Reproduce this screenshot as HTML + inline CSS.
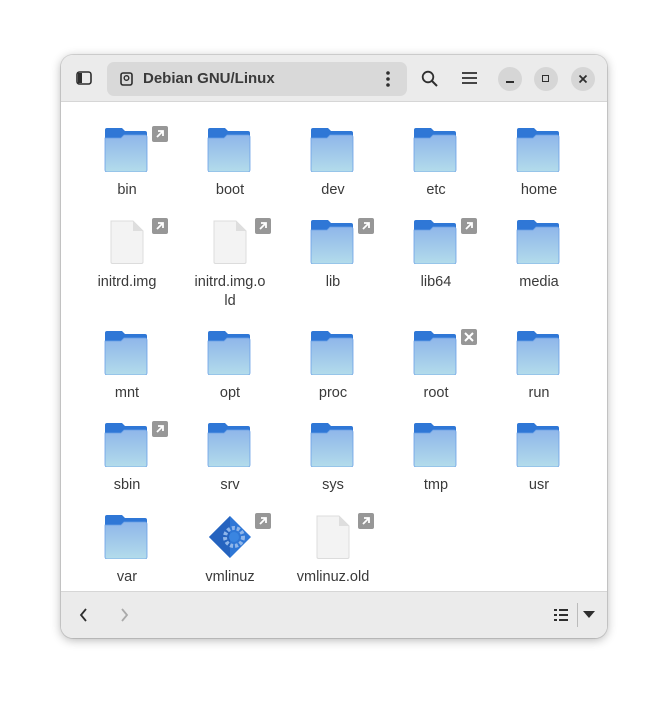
<!DOCTYPE html><html><head><style>
body{margin:0;width:668px;height:706px;background:#fff;font-family:"Liberation Sans","DejaVu Sans",sans-serif;position:relative;overflow:hidden}
.win{position:absolute;left:61px;top:55px;width:546px;height:583px;border-radius:12px;background:#fff;box-shadow:0 2px 10px rgba(0,0,0,.3),0 0 0 1px rgba(0,0,0,.12);overflow:hidden}
.hdr{position:absolute;left:0;top:0;right:0;height:46px;background:#ebebeb;border-bottom:1px solid #d6d6d6}
.path{position:absolute;left:46px;top:7px;width:300px;height:34px;background:#d9d9d9;border-radius:7px}
.path span{position:absolute;left:36px;top:8px;font-size:15px;font-weight:bold;color:#3a3a3a}
.cb{position:absolute;top:12px;width:24px;height:24px;border-radius:50%;background:#d6d6d6}
.ftr{position:absolute;left:0;bottom:0;right:0;height:46px;background:#ebebeb;border-top:1px solid #d6d6d6}
.it{position:absolute;width:100px;text-align:center;font-size:14.5px;color:#3a3a3a;line-height:19px}
.ic{position:absolute}
</style></head><body>
<svg width="0" height="0" style="position:absolute"><defs>
<linearGradient id="fg" x1="0" y1="0" x2="0" y2="1"><stop offset="0" stop-color="#8fb6ea"/><stop offset="1" stop-color="#b3dceb"/></linearGradient>
<symbol id="folder" viewBox="0 0 44 44"><path d="M1 2a2 2 0 0 1 2-2h15l3 3h20a2 2 0 0 1 2 2v35H1z" fill="#2f77d6"/><path d="M1 10h16l3-3h21a2 2 0 0 1 2 2v33a2 2 0 0 1-2 2H3a2 2 0 0 1-2-2z" fill="url(#fg)" stroke="#6aa0e6" stroke-width=".8"/></symbol>
<symbol id="file" viewBox="0 0 44 44"><path d="M6 1h22l10 10v31a1.5 1.5 0 0 1-1.5 1.5h-29A1.5 1.5 0 0 1 6 42z" fill="#f3f3f3" stroke="#dcdcdc"/><path d="M28 1v10h10z" fill="#dedede"/></symbol>
<symbol id="link" viewBox="0 0 16 16"><rect width="16" height="16" rx="2" fill="#979797"/><path d="M5 11l6-6M6 5h5v5" stroke="#fff" stroke-width="1.8" fill="none"/></symbol>
</defs></svg>
<div class="win">
<div class="hdr">
<svg style="position:absolute;left:15px;top:15px" width="16" height="16"><rect x="1" y="2" width="14" height="12" rx="2.5" fill="none" stroke="#2e2e2e" stroke-width="1.6"/><rect x="2" y="3" width="4" height="10" fill="#2e2e2e"/></svg>
<div class="path"><svg style="position:absolute;left:13px;top:10px" width="14" height="14"><rect x="1" y="1" width="11" height="12" rx="2" fill="none" stroke="#2e2e2e" stroke-width="1.6"/><circle cx="6.5" cy="6" r="2.3" fill="none" stroke="#2e2e2e" stroke-width="1.4"/></svg><span>Debian GNU/Linux</span>
<svg style="position:absolute;left:278px;top:8px" width="6" height="18"><circle cx="3" cy="3" r="1.8" fill="#2e2e2e"/><circle cx="3" cy="9" r="1.8" fill="#2e2e2e"/><circle cx="3" cy="15" r="1.8" fill="#2e2e2e"/></svg></div>
<svg style="position:absolute;left:360px;top:15px" width="18" height="18"><circle cx="7" cy="7" r="5.3" fill="none" stroke="#2e2e2e" stroke-width="1.8"/><path d="M11 11l5 5" stroke="#2e2e2e" stroke-width="2"/></svg>
<svg style="position:absolute;left:400px;top:16px" width="17" height="14"><path d="M1 2h15M1 7h15M1 12h15" stroke="#2e2e2e" stroke-width="1.8"/></svg>
<div class="cb" style="left:437px"><div style="position:absolute;left:8px;top:14px;width:8px;height:2px;background:#2e2e2e"></div></div>
<div class="cb" style="left:473px"><div style="position:absolute;left:8px;top:8px;width:5px;height:5px;border:1.6px solid #2e2e2e"></div></div>
<div class="cb" style="left:510px"><svg width="24" height="24"><path d="M8.5 8.5l7 7M15.5 8.5l-7 7" stroke="#2e2e2e" stroke-width="1.8"/></svg></div>
</div>
<div class="ftr">
<svg style="position:absolute;left:18px;top:15px" width="10" height="16"><path d="M7 2L2 8l5 6" stroke="#2e2e2e" stroke-width="1.8" fill="none"/></svg>
<svg style="position:absolute;left:58px;top:15px" width="10" height="16"><path d="M3 2l5 6-5 6" stroke="#aaa" stroke-width="1.8" fill="none"/></svg>
<svg style="position:absolute;left:492px;top:16px" width="16" height="14"><path d="M1 2h3M1 7h3M1 12h3M6 2h9M6 7h9M6 12h9" stroke="#2e2e2e" stroke-width="2"/></svg>
<div style="position:absolute;left:516px;top:11px;width:1px;height:24px;background:#bbb"></div>
<svg style="position:absolute;left:522px;top:19px" width="12" height="8"><path d="M0 0h12L6 7z" fill="#2e2e2e"/></svg>
</div>
</div>
<div id="g"></div>
<script>
var items=[["bin","f",1],["boot","f"],["dev","f"],["etc","f"],["home","f"],
["initrd.img","d",1],["initrd.img.o<br>ld","d",1],["lib","f",1],["lib64","f",1],["media","f"],
["mnt","f"],["opt","f"],["proc","f"],["root","f",2],["run","f"],
["sbin","f",1],["srv","f"],["sys","f"],["tmp","f"],["usr","f"],
["var","f"],["vmlinuz","v",1],["vmlinuz.old","d",1]];
var tops=[128,220,331,423,515],h="";
items.forEach(function(it,i){var c=i%5,r=Math.floor(i/5),cx=127+103*c,t=tops[r];
if(it[1]=="f")h+='<svg class="ic" style="left:'+(cx-23)+'px;top:'+t+'px" width="44" height="44"><use href="#folder"/></svg>';
else if(it[1]=="d")h+='<svg class="ic" style="left:'+(cx-22)+'px;top:'+t+'px" width="44" height="44"><use href="#file"/></svg>';
else h+='<svg class="ic" style="left:'+(cx-22)+'px;top:'+t+'px" width="44" height="44"><path d="M22 1L43 22 22 43 1 22z" fill="#2f77d6"/><path d="M22 1L1 22l21 21z" fill="#2563bf"/><circle cx="26" cy="22" r="9" fill="none" stroke="#8fb6ea" stroke-width="4" stroke-dasharray="3 2"/><circle cx="26" cy="22" r="5" fill="#3a85e0"/></svg>';
if(it[2]==1)h+='<svg class="ic" style="left:'+(cx+25)+'px;top:'+(t-2)+'px" width="16" height="16"><use href="#link"/></svg>';
if(it[2]==2)h+='<svg class="ic" style="left:'+(cx+25)+'px;top:'+(t-2)+'px" width="16" height="16"><rect width="16" height="16" rx="2" fill="#979797"/><path d="M4 4l8 8M12 4l-8 8" stroke="#fff" stroke-width="2"/></svg>';
h+='<div class="it" style="left:'+(cx-50)+'px;top:'+(t+53)+'px">'+it[0]+'</div>';});
document.getElementById("g").innerHTML=h;
</script>
</body></html>
